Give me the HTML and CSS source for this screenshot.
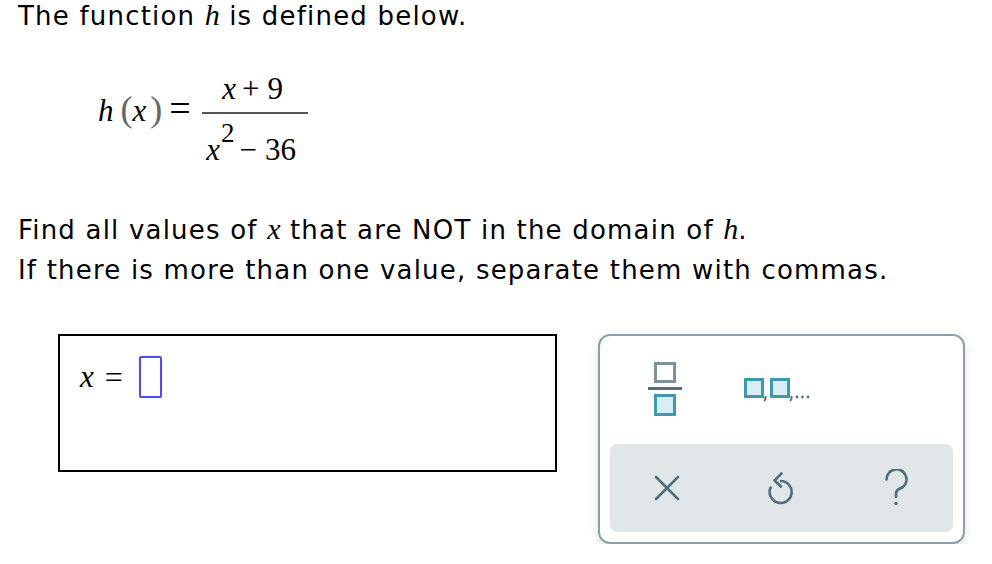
FILE: index.html
```html
<!DOCTYPE html>
<html>
<head>
<meta charset="utf-8">
<link rel="stylesheet" href="styles.css">
</head>
<body>
<div class="page">
  <p class="line first">The function <span class="mv">h</span> is defined below.</p>
  <div class="equation">
    <span class="lhs"><span class="mi">h</span><span class="paren lp">(</span><span class="mi">x</span><span class="paren rp">)</span></span>
    <span class="eq">=</span>
    <span class="frac">
      <span class="num"><span class="mi">x</span><span class="op">+</span>9</span>
      <span class="den"><span class="mi">x</span><span class="sup">2</span><span class="op">−</span>36</span>
    </span>
  </div>
  <p class="line">Find all values of <span class="mv">x</span> that are NOT in the domain of <span class="mv">h</span>.</p>
  <p class="line">If there is more than one value, separate them with commas.</p>
  <div class="work">
    <div class="answer">
      <span class="ax">x</span><span class="aeq">=</span><span class="slot"></span>
    </div>
    <div class="pad">
      <div class="tools">
        <button class="tool frac-btn" aria-label="fraction">
          <svg width="36" height="56" viewBox="0 0 36 56">
            <rect x="7.5" y="1.5" width="19" height="18" fill="#fff" stroke="#7b939d" stroke-width="3"/>
            <rect x="0" y="25" width="34" height="3" fill="#56707c"/>
            <rect x="7.5" y="33.5" width="19" height="19" fill="#d6edf3" stroke="#3f98b0" stroke-width="3"/>
          </svg>
        </button>
        <button class="tool list-btn" aria-label="list">
          <svg width="76" height="30" viewBox="0 0 76 30">
            <rect x="1.5" y="1.5" width="17" height="17" fill="#d6edf3" stroke="#3f98b0" stroke-width="3"/>
            <path d="M21.5 18 L21.5 20 Q21.5 22 20 23" stroke="#56707c" stroke-width="2" fill="none"/>
            <rect x="27.5" y="1.5" width="17" height="17" fill="#d6edf3" stroke="#3f98b0" stroke-width="3"/>
            <path d="M47.5 18 L47.5 20 Q47.5 22 46 23" stroke="#56707c" stroke-width="2" fill="none"/>
            <circle cx="53" cy="19" r="1.4" fill="#56707c"/>
            <circle cx="58.5" cy="19" r="1.4" fill="#56707c"/>
            <circle cx="64" cy="19" r="1.4" fill="#56707c"/>
          </svg>
        </button>
      </div>
      <div class="actions">
        <button class="act" aria-label="clear">
          <svg width="26" height="26" viewBox="0 0 26 26"><path d="M2 2 L24 24 M24 2 L2 24" stroke="#4f6e7c" stroke-width="2.6" stroke-linecap="round"/></svg>
        </button>
        <button class="act" aria-label="undo">
          <svg width="28" height="34" viewBox="0 0 28 34"><path d="M3.6 16.5 A11 11 0 1 0 14 10" stroke="#4f6e7c" stroke-width="2.6" fill="none" stroke-linecap="round"/><path d="M14.5 2.5 L7.5 9.5 L14 15.5" stroke="#4f6e7c" stroke-width="2.6" fill="none" stroke-linecap="round" stroke-linejoin="round"/></svg>
        </button>
        <button class="act" aria-label="help">
          <svg width="26" height="38" viewBox="0 0 26 38"><path d="M3.5 10.5 A10 10 0 1 1 16 20 Q13 21.5 13 25 L13 28" stroke="#4f6e7c" stroke-width="2.6" fill="none" stroke-linecap="round"/><circle cx="13" cy="34.5" r="1.8" fill="#4f6e7c"/></svg>
        </button>
      </div>
    </div>
  </div>
</div>
</body>
</html>
```
FILE: styles.css
```css
* { box-sizing: border-box; }
body {
  margin: 0;
  background: #fff;
  font-family: "DejaVu Sans", Verdana, sans-serif;
  color: #000;
}
.page {
  padding: 1px 0 0 18px;
}
.line {
  margin: 0;
  font-size: 26px;
  letter-spacing: 1.2px;
  line-height: 40px;
  white-space: nowrap;
}
.first {
  line-height: 30px;
}
.mv {
  font-family: "Liberation Serif", "Times New Roman", serif;
  font-style: italic;
  font-size: 30px;
  line-height: 0.9;
  letter-spacing: 0;
}
.equation {
  display: flex;
  align-items: flex-start;
  height: 179px;
  padding-left: 80px;
  font-family: "Liberation Serif", "Times New Roman", serif;
  font-size: 31px;
}
.mi { font-style: italic; }
.lhs {
  margin-top: 60px;
  line-height: 36px;
  white-space: nowrap;
}
.lhs > span { line-height: 36px; }
.paren { color: #666; font-size: 36px; }
.lp { margin-left: 7px; }
.rp { margin-left: 4px; }
.eq {
  font-size: 38px;
  line-height: 38px;
  margin: 58px 11px 0 7px;
}
.frac {
  width: 106px;
  margin-top: 43px;
  display: flex;
  flex-direction: column;
  align-items: stretch;
}
.num {
  text-align: center;
  line-height: 30px;
  height: 38px;
  padding-right: 4px;
  white-space: nowrap;
}
.den {
  border-top: 2px solid #555;
  text-align: center;
  line-height: 30px;
  padding: 19px 7px 0 0;
  white-space: nowrap;
}
.sup {
  font-size: 27px;
  line-height: 0;
  vertical-align: 18px;
  margin-left: 1px;
}
.num .op { margin: 0 8px 0 6px; }
.den .op { margin: 0 8px 0 5px; }
.work {
  display: flex;
  align-items: flex-start;
  margin-top: 44px;
  padding-left: 40px;
}
.answer {
  width: 499px;
  height: 138px;
  border: 2px solid #000;
  display: flex;
  align-items: flex-start;
  padding: 20px 0 0 20px;
  font-family: "Liberation Serif", "Times New Roman", serif;
  font-size: 31px;
}
.ax { font-style: italic; line-height: 42px; }
.aeq { margin: 0 16px 0 11px; line-height: 42px; font-size: 32px; }
.slot {
  width: 23px;
  height: 42px;
  border: 2px solid #4e4ef0;
  border-radius: 2px;
  box-shadow: 0 0 1px rgba(80, 80, 240, 0.6);
}
.pad {
  width: 367px;
  height: 210px;
  margin-left: 41px;
  border: 2px solid #8aa0a9;
  border-radius: 12px;
  box-shadow: 0 4px 8px rgba(120, 140, 150, 0.25);
  padding: 9px 10px 10px 10px;
  display: flex;
  flex-direction: column;
}
.tools {
  display: flex;
  align-items: flex-start;
  height: 99px;
}
.tool {
  background: none;
  border: 0;
  padding: 0;
  margin: 0;
}
.frac-btn { margin: 17px 0 0 38px; }
.list-btn { margin: 33px 0 0 60px; }
.actions {
  flex: 1;
  background: #e1e6e9;
  border-radius: 7px;
  display: flex;
  align-items: center;
  justify-content: space-around;
}
.act {
  background: none;
  border: 0;
  padding: 0;
  display: flex;
  width: 70px;
  justify-content: center;
}
```
